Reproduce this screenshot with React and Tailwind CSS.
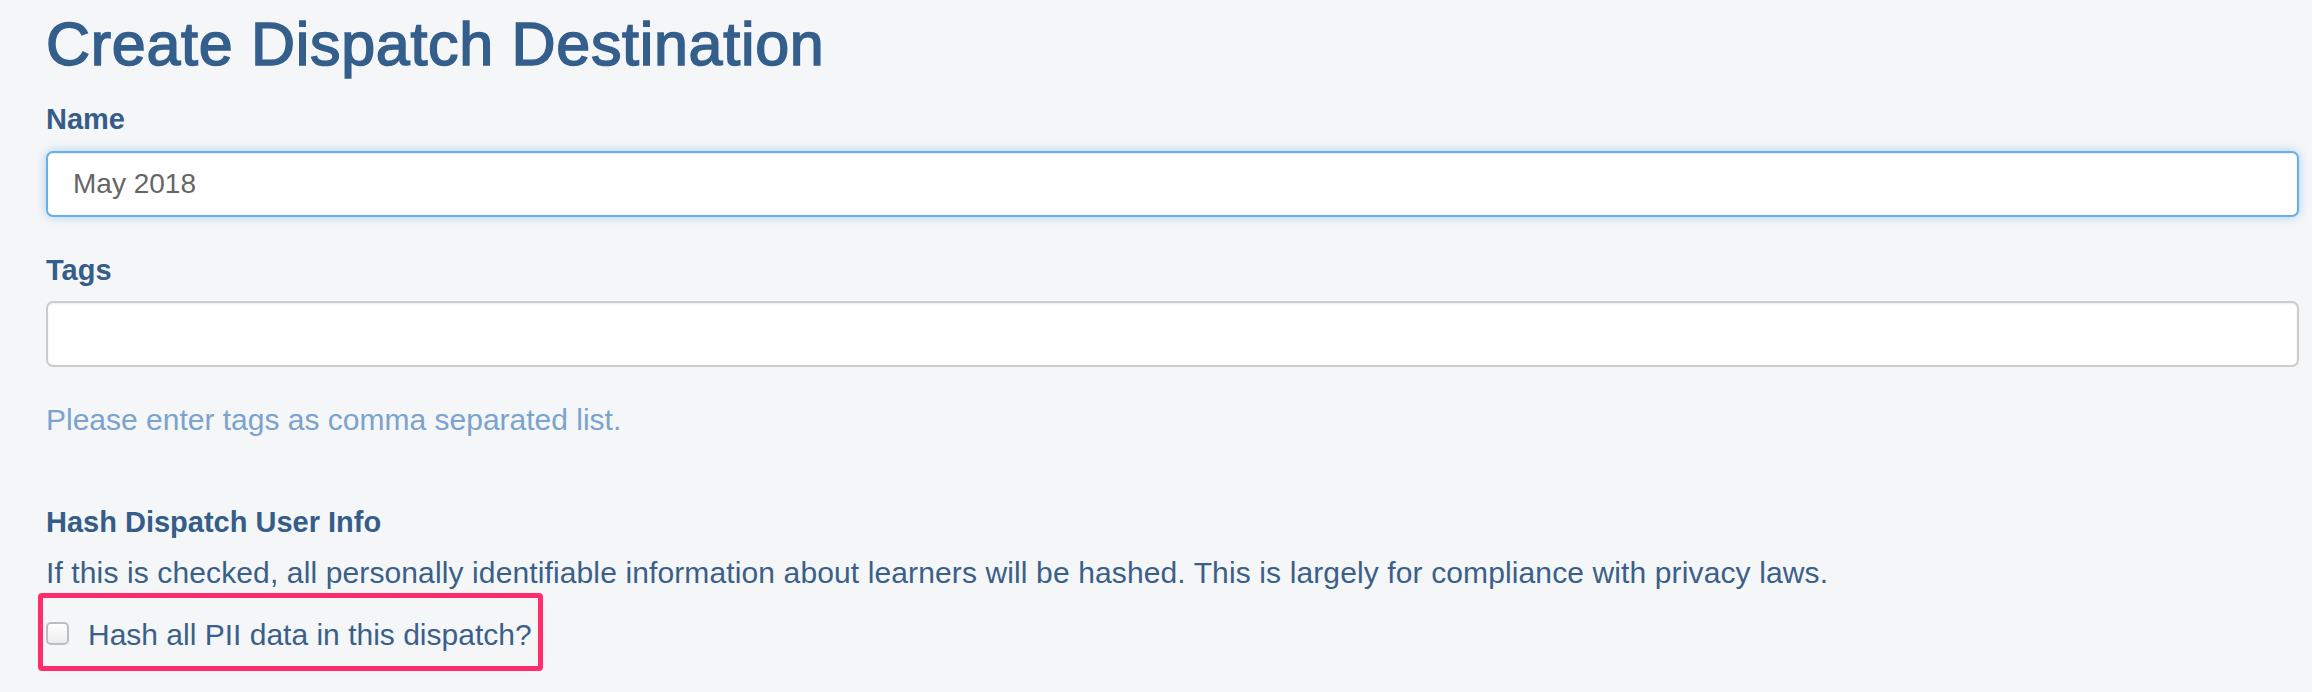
import React from 'react';

const FONT = "font-['Liberation_Sans',Arial,sans-serif]";

const Label = ({ children, className = '' }) => (
  <label className={`block text-[29px] leading-[40px] font-bold text-[#355d89] ${className}`}>{children}</label>
);

export default function App() {
  return (
    <div className={`${FONT} min-h-[692px] bg-[#f5f6f8] pl-[46px] pr-[13px] pt-[9px]`}>
      <h1 className="text-[61px] leading-[70px] tracking-[0.7px] font-normal text-[#345e8b] [-webkit-text-stroke:1.6px_#345e8b]">
        Create Dispatch Destination
      </h1>

      <Label className="mt-[20px]">Name</Label>
      <input
        type="text"
        defaultValue="May 2018"
        className="mt-[12px] block w-full h-[66px] rounded-[7px] border-2 border-[#66afe9] bg-white pl-[25px] text-[28px] text-[#666] outline-none shadow-[inset_0_1px_1px_rgba(0,0,0,0.075),0_0_10px_rgba(102,175,233,0.55)]"
      />

      <Label className="mt-[33px]">Tags</Label>
      <input
        type="text"
        className="mt-[11px] block w-full h-[66px] rounded-[7px] border-2 border-[#cccccc] bg-white pl-[25px] text-[28px] text-[#666] outline-none shadow-[inset_0_1px_2px_rgba(0,0,0,0.08)]"
      />

      <p className="mt-[33px] text-[30px] leading-[40px] text-[#7aa3cd]">
        Please enter tags as comma separated list.
      </p>

      <Label className="mt-[62px]">Hash Dispatch User Info</Label>
      <p className="mt-[11px] text-[30px] leading-[40px] tracking-[0.12px] text-[#3a5f89]">
        If this is checked, all personally identifiable information about learners will be hashed. This is largely for compliance with privacy laws.
      </p>

      <div className="-ml-[8px] flex h-[78px] w-[505px] items-center rounded-[4px] border-[5px] border-[#ff2d6b] pl-[3px]">
        <input
          type="checkbox"
          className="h-[23px] w-[23px] shrink-0 appearance-none rounded-[5px] border-2 border-[#bdbdbd] bg-linear-to-b from-white to-[#ececec] mt-[2px]"
        />
        <span className="ml-[19px] pt-[6px] text-[30px] leading-[40px] text-[#3a5f89]">
          Hash all PII data in this dispatch?
        </span>
      </div>
    </div>
  );
}
